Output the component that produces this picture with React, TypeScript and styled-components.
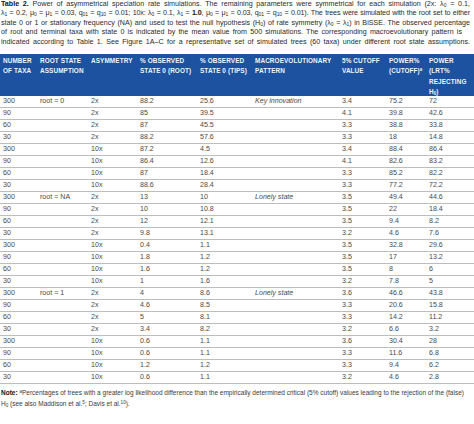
import React from 'react';
import styled, { createGlobalStyle } from 'styled-components';

const GlobalStyle = createGlobalStyle`
  html, body {
    margin: 0;
    padding: 0;
    background: #fff;
  }
  body {
    font-family: 'Liberation Sans', Arial, sans-serif;
  }
  sub, sup {
    line-height: 0;
    font-size: 70%;
    text-transform: none;
  }
  sub {
    vertical-align: -0.25em;
  }
  sup {
    vertical-align: 0.45em;
  }
`;

const COLS = '37px 51px 49px 60px 55px 87px 47px 40px 48px';

const Page = styled.div`
  width: 474px;
  height: 424px;
  overflow: hidden;
  background: #fff;
`;

const Caption = styled.div`
  height: 54px;
  padding-left: 1px;
  font-size: 7.15px;
  line-height: 9.4px;
  color: #2a2a2a;

  b {
    font-weight: bold;
    color: #111;
  }
`;

const CapLine = styled.span<{ $w?: number; $tight?: boolean }>`
  display: block;
  width: ${(p) => p.$w ?? 469}px;
  white-space: nowrap;
  text-align: justify;
  text-align-last: justify;
  letter-spacing: ${(p) => (p.$tight ? '-0.12px' : 'normal')};
`;

const Head = styled.div`
  display: grid;
  grid-template-columns: ${COLS};
  height: 42px;
  background: #1d52a0;
  padding-top: 1.5px;
  box-sizing: border-box;
`;

const HeadCell = styled.div`
  padding-left: 3px;
  font-size: 6.4px;
  font-weight: bold;
  line-height: 10.5px;
  color: #eef2fa;
  letter-spacing: 0.1px;
  text-transform: uppercase;
`;

const Row = styled.div`
  display: grid;
  grid-template-columns: ${COLS};
  height: 12px;
  border-bottom: 1px solid #bdbdbd;
  box-sizing: border-box;
`;

const Cell = styled.div<{ $italic?: boolean }>`
  padding-left: 3px;
  font-size: 7.1px;
  line-height: 11.5px;
  color: #4a4a4a;
  white-space: nowrap;
  font-style: ${(p) => (p.$italic ? 'italic' : 'normal')};
`;

const Note = styled.p`
  margin: 0;
  padding: 4px 1px 0;
  font-size: 6.5px;
  line-height: 10.5px;
  color: #3a3a3a;
  white-space: nowrap;

  b {
    color: #111;
  }
`;

type Group = {
  root: string;
  pattern: string;
  rows: string[][];
};

const groups: Group[] = [
  {
    root: 'root = 0',
    pattern: 'Key innovation',
    rows: [
      ['300', '2x', '88.2', '25.6', '3.4', '75.2', '72'],
      ['90', '2x', '85', '39.5', '4.1', '39.8', '42.6'],
      ['60', '2x', '87', '45.5', '3.3', '38.8', '33.8'],
      ['30', '2x', '88.2', '57.6', '3.3', '18', '14.8'],
      ['300', '10x', '87.2', '4.5', '3.4', '88.4', '86.4'],
      ['90', '10x', '86.4', '12.6', '4.1', '82.6', '83.2'],
      ['60', '10x', '87', '18.4', '3.3', '85.2', '82.2'],
      ['30', '10x', '88.6', '28.4', '3.3', '77.2', '72.2'],
    ],
  },
  {
    root: 'root = NA',
    pattern: 'Lonely state',
    rows: [
      ['300', '2x', '13', '10', '3.5', '49.4', '44.6'],
      ['90', '2x', '10', '10.8', '3.5', '22', '18.4'],
      ['60', '2x', '12', '12.1', '3.5', '9.4', '8.2'],
      ['30', '2x', '9.8', '13.1', '3.2', '4.6', '7.6'],
      ['300', '10x', '0.4', '1.1', '3.5', '32.8', '29.6'],
      ['90', '10x', '1.8', '1.2', '3.5', '17', '13.2'],
      ['60', '10x', '1.6', '1.2', '3.5', '8', '6'],
      ['30', '10x', '1', '1.6', '3.2', '7.8', '5'],
    ],
  },
  {
    root: 'root = 1',
    pattern: 'Lonely state',
    rows: [
      ['300', '2x', '4', '8.6', '3.6', '46.6', '43.8'],
      ['90', '2x', '4.6', '8.5', '3.3', '20.6', '15.8'],
      ['60', '2x', '5', '8.1', '3.3', '14.2', '11.2'],
      ['30', '2x', '3.4', '8.2', '3.2', '6.6', '3.2'],
      ['300', '10x', '0.6', '1.1', '3.6', '30.4', '28'],
      ['90', '10x', '0.6', '1.1', '3.3', '11.6', '6.8'],
      ['60', '10x', '1.2', '1.2', '3.3', '9.4', '6.2'],
      ['30', '10x', '0.6', '1.1', '3.2', '4.6', '2.8'],
    ],
  },
];

const App = () => {
  return (
    <Page>
      <GlobalStyle />
      <Caption>
        <CapLine>
          <b>Table 2.</b> Power of asymmetrical speciation rate simulations. The remaining parameters were
          symmetrical for each simulation (2x: λ<sub>0</sub> = 0.1,
        </CapLine>
        <CapLine $tight>
          λ<sub>1</sub> = 0.2, μ<sub>0</sub> = μ<sub>1</sub> = 0.03, q<sub>01</sub> = q<sub>10</sub> = 0.01;
          10x: λ<sub>0</sub> = 0.1, λ<sub>1</sub> = <b>1.0</b>, μ<sub>0</sub> = μ<sub>1</sub> = 0.03, q
          <sub>01</sub> = q<sub>10</sub> = 0.01). The trees were simulated with the root set to either
        </CapLine>
        <CapLine>
          state 0 or 1 or stationary frequency (NA) and used to test the null hypothesis (H<sub>0</sub>) of
          rate symmetry (λ<sub>0</sub> = λ<sub>1</sub>) in BiSSE. The observed percentage
        </CapLine>
        <CapLine $w={461}>
          of root and terminal taxa with state 0 is indicated by the mean value from 500 simulations. The
          corresponding macroevolutionary pattern is
        </CapLine>
        <CapLine>
          indicated according to Table 1. See Figure 1A–C for a representative set of simulated trees (60
          taxa) under different root state assumptions.
        </CapLine>
      </Caption>
      <Head>
        <HeadCell>Number of taxa</HeadCell>
        <HeadCell>Root state assumption</HeadCell>
        <HeadCell>Asymmetry</HeadCell>
        <HeadCell>% Observed state 0 (root)</HeadCell>
        <HeadCell>% Observed state 0 (tips)</HeadCell>
        <HeadCell>Macroevolutionary pattern</HeadCell>
        <HeadCell>5% cutoff value</HeadCell>
        <HeadCell>
          Power% (cutoff)<sup>a</sup>
        </HeadCell>
        <HeadCell>
          Power (LRT% rejecting H<sub>0</sub>)
        </HeadCell>
      </Head>
      {groups.map((g) =>
        g.rows.map((r, i) => (
          <Row key={g.root + i}>
            <Cell>{r[0]}</Cell>
            <Cell>{i === 0 ? g.root : ''}</Cell>
            <Cell>{r[1]}</Cell>
            <Cell>{r[2]}</Cell>
            <Cell>{r[3]}</Cell>
            <Cell $italic>{i === 0 ? g.pattern : ''}</Cell>
            <Cell>{r[4]}</Cell>
            <Cell>{r[5]}</Cell>
            <Cell>{r[6]}</Cell>
          </Row>
        ))
      )}
      <Note>
        <b>Note:</b> <sup>a</sup>Percentages of trees with a greater log likelihood difference than the
        empirically determined critical (5% cutoff) values leading to the rejection of the (false)
        <br />
        H<sub>0</sub> (see also Maddison et al.<sup>5</sup>; Davis et al.<sup>10</sup>).
      </Note>
    </Page>
  );
};

export default App;
